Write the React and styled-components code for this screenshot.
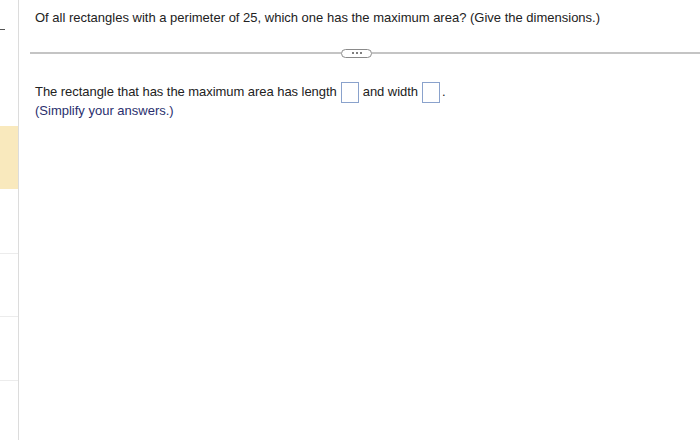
import styled, { createGlobalStyle } from "styled-components";

const GlobalStyle = createGlobalStyle`
  html, body {
    margin: 0;
    padding: 0;
    background: #fff;
  }
  body {
    font-family: "Liberation Sans", Arial, sans-serif;
    color: #222;
  }
`;

const Page = styled.div`
  display: flex;
  width: 700px;
  height: 440px;
  overflow: hidden;
`;

const Sidebar = styled.div`
  width: 18px;
  flex-shrink: 0;
  border-right: 1px solid #dcdcdc;
  display: flex;
  flex-direction: column;
`;

const Dash = styled.div`
  width: 5px;
  height: 1px;
  background: #555;
  margin-top: 29px;
`;

const SideSlot = styled.div`
  height: ${(p) => p.$h}px;
  margin-top: ${(p) => p.$top || 0}px;
  background: ${(p) => (p.$active ? "#f9e9bd" : "transparent")};
  border-bottom: 1px solid ${(p) => (p.$line ? "#ececec" : "transparent")};
`;

const Main = styled.div`
  flex: 1;
  display: flex;
  flex-direction: column;
`;

const Question = styled.div`
  font-size: 13px;
  padding: 10px 0 0 16px;
  line-height: 16px;
`;

const Divider = styled.div`
  margin: 22px 0 0 11px;
  display: flex;
  align-items: center;
  height: 10px;
`;

const Rule = styled.div`
  height: 2px;
  background: #c4c4c4;
  flex: ${(p) => (p.$grow ? 1 : "none")};
  width: ${(p) => (p.$w ? p.$w + "px" : "auto")};
`;

const MoreButton = styled.div`
  width: 29px;
  height: 7px;
  border: 1px solid #8a8a8a;
  border-radius: 5px;
  display: flex;
  align-items: center;
  justify-content: center;
  gap: 2px;
  background: #fff;
`;

const Dot = styled.span`
  width: 2px;
  height: 2px;
  background: #555;
  border-radius: 50%;
`;

const Answer = styled.div`
  font-size: 13px;
  padding: 23px 0 0 16px;
  line-height: 22px;
  display: flex;
  align-items: center;
  letter-spacing: -0.05px;
`;

const Box = styled.span`
  display: inline-block;
  width: 16px;
  height: 19px;
  border: 1px solid #8aa2cc;
  margin: 0 ${(p) => (p.$last ? 2 : 4)}px 0 4px;
`;

const Hint = styled.div`
  font-size: 13px;
  color: #2a2f6e;
  padding: 0 0 0 16px;
  line-height: 16px;
`;

export default function App() {
  return (
    <>
      <GlobalStyle />
      <Page>
        <Sidebar>
          <Dash />
          <SideSlot $top={96} $h={62} $active />
          <SideSlot $h={64} $line />
          <SideSlot $h={62} $line />
          <SideSlot $h={63} $line />
        </Sidebar>
        <Main>
          <Question>
            Of all rectangles with a perimeter of 25, which one has the maximum
            area? (Give the dimensions.)
          </Question>
          <Divider>
            <Rule $w={311} />
            <MoreButton>
              <Dot />
              <Dot />
              <Dot />
            </MoreButton>
            <Rule $grow />
          </Divider>
          <Answer>
            The rectangle that has the maximum area has length
            <Box />
            and width
            <Box $last />.
          </Answer>
          <Hint>(Simplify your answers.)</Hint>
        </Main>
      </Page>
    </>
  );
}
